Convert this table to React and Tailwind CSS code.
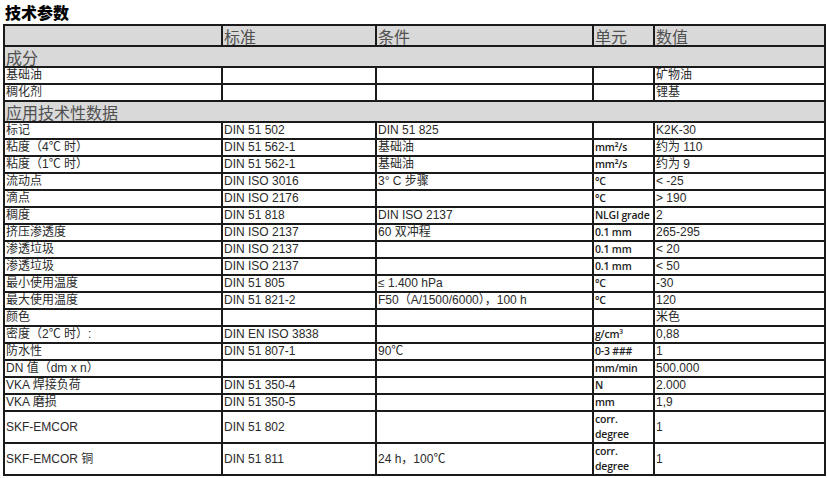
import React from "react";

// Technical data sheet table — 技术参数

const rows = [
  ["标记", "DIN 51 502", "DIN 51 825", "", "K2K-30"],
  ["粘度（4℃ 时）", "DIN 51 562-1", "基础油", "mm²/s", "约为 110"],
  ["粘度（1℃ 时）", "DIN 51 562-1", "基础油", "mm²/s", "约为 9"],
  ["流动点", "DIN ISO 3016", "3° C 步骤", "°C", "< -25"],
  ["滴点", "DIN ISO 2176", "", "°C", "> 190"],
  ["稠度", "DIN 51 818", "DIN ISO 2137", "NLGI grade", "2"],
  ["挤压渗透度", "DIN ISO 2137", "60 双冲程", "0.1 mm", "265-295"],
  ["渗透垃圾", "DIN ISO 2137", "", "0.1 mm", "< 20"],
  ["渗透垃圾", "DIN ISO 2137", "", "0.1 mm", "< 50"],
  ["最小使用温度", "DIN 51 805", "≤ 1.400 hPa", "°C", "-30"],
  ["最大使用温度", "DIN 51 821-2", "F50（A/1500/6000），100 h", "°C", "120"],
  ["颜色", "", "", "", "米色"],
  ["密度（2℃ 时）:", "DIN EN ISO 3838", "", "g/cm³", "0,88"],
  ["防水性", "DIN 51 807-1", "90℃", "0-3 ###", "1"],
  ["DN 值（dm x n）", "", "", "mm/min", "500.000"],
  ["VKA 焊接负荷", "DIN 51 350-4", "", "N", "2.000"],
  ["VKA 磨损", "DIN 51 350-5", "", "mm", "1,9"],
];

const tallRows = [
  ["SKF-EMCOR", "DIN 51 802", "", "1"],
  ["SKF-EMCOR 铜", "DIN 51 811", "24 h，100℃", "1"],
];

const cell = "border-r-2 border-b-2 border-solid border-[#1a1a1a] px-[1px] py-0 text-left align-middle whitespace-nowrap";
const txt = "font-['Liberation_Sans','Noto_Sans_CJK_SC',sans-serif] text-[12px] leading-[13px] text-[#2a2a2a]";
const unit = "font-['Open_Sans','Noto_Sans_CJK_SC',sans-serif] font-semibold text-[10.5px] leading-[13px] tracking-[-0.2px] text-[#222]";
const head = "font-['Noto_Sans_CJK_SC',sans-serif] text-[16px] leading-[16px] text-[#505050] bg-[#d9d9d9]";

export default function App() {
  return (
    <div className="w-[827px] h-[478px] bg-white px-[3px]">
      {/* ── Title ─────────────────────────────────────────────── */}
      <div className="h-[24px] pl-[2px] pt-[2px] font-['Noto_Sans_CJK_SC',sans-serif] text-[16px] leading-[20px] font-black text-black">
        技术参数
      </div>

      {/* ── Table ─────────────────────────────────────────────── */}
      <table className="w-[821px] table-fixed border-separate border-spacing-0 border-l-2 border-t-2 border-solid border-[#1a1a1a]">
        <colgroup>
          <col className="w-[218px]" />
          <col className="w-[154px]" />
          <col className="w-[217px]" />
          <col className="w-[61px]" />
          <col className="w-[171px]" />
        </colgroup>
        <tbody>
          <tr className="h-[21px]">
            <td className={`${cell} ${head}`}></td>
            <td className={`${cell} ${head}`}>标准</td>
            <td className={`${cell} ${head}`}>条件</td>
            <td className={`${cell} ${head}`}>单元</td>
            <td className={`${cell} ${head}`}>数值</td>
          </tr>
          <tr className="h-[21px]">
            <td colSpan={5} className={`${cell} ${head}`}>成分</td>
          </tr>
          <tr className="h-[17px]">
            <td className={`${cell} ${txt}`}>基础油</td>
            <td className={cell}></td>
            <td className={cell}></td>
            <td className={cell}></td>
            <td className={`${cell} ${txt}`}>矿物油</td>
          </tr>
          <tr className="h-[17px]">
            <td className={`${cell} ${txt}`}>稠化剂</td>
            <td className={cell}></td>
            <td className={cell}></td>
            <td className={cell}></td>
            <td className={`${cell} ${txt}`}>锂基</td>
          </tr>
          <tr className="h-[21px]">
            <td colSpan={5} className={`${cell} ${head}`}>应用技术性数据</td>
          </tr>
          {rows.map((r, i) => (
            <tr key={i} className="h-[17px]">
              <td className={`${cell} ${txt}`}>{r[0]}</td>
              <td className={`${cell} ${txt}`}>{r[1]}</td>
              <td className={`${cell} ${txt}`}>{r[2]}</td>
              <td className={`${cell} ${unit}`}>{r[3]}</td>
              <td className={`${cell} ${txt}`}>{r[4]}</td>
            </tr>
          ))}
          {tallRows.map((r, i) => (
            <tr key={i} className="h-[32px]">
              <td className={`${cell} ${txt}`}>{r[0]}</td>
              <td className={`${cell} ${txt}`}>{r[1]}</td>
              <td className={`${cell} ${txt}`}>{r[2]}</td>
              <td className={`${cell} ${unit} leading-[15px]`}>
                corr.
                <br />
                degree
              </td>
              <td className={`${cell} ${txt}`}>{r[3]}</td>
            </tr>
          ))}
        </tbody>
      </table>
    </div>
  );
}
